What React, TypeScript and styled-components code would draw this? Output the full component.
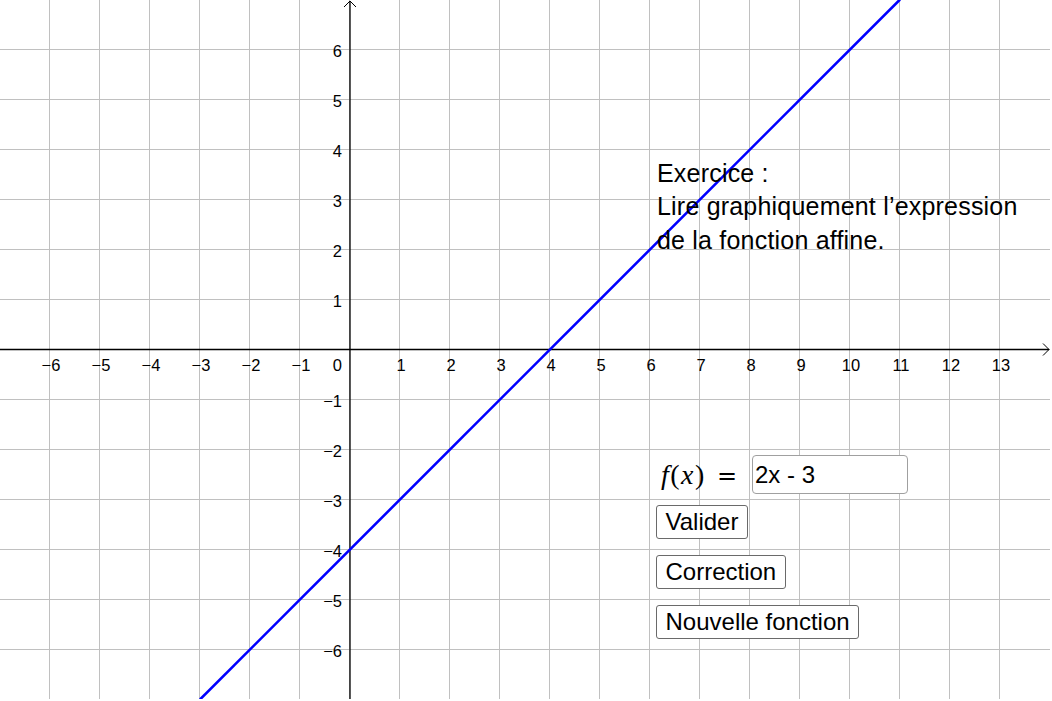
import React from 'react';
import styled, { createGlobalStyle } from 'styled-components';

const GlobalStyle = createGlobalStyle`
    html, body {
        margin: 0;
        padding: 0;
        background: #ffffff;
        overflow: hidden;
    }
`;

const W = 1050;
const H = 699;
const OX = 350;
const OY = 349.5;
const UNIT = 50;

const Stage = styled.div`
    position: relative;
    width: 1052px;
    height: 701px;
    background: #ffffff;
    overflow: hidden;
    font-family: 'Liberation Sans', Arial, sans-serif;
`;

const Canvas = styled.svg`
    display: block;
    width: ${W}px;
    height: ${H}px;
`;

const Statement = styled.div`
    position: absolute;
    left: 657px;
    top: 157px;
    font-family: 'Liberation Sans', Arial, sans-serif;
    font-size: 25px;
    line-height: 32.5px;
    color: #000000;
    white-space: nowrap;
`;

const StatementLine = styled.div<{ $shift?: number }>`
    margin-top: ${(p) => p.$shift ?? 0}px;
    letter-spacing: 0.2px;
`;

const Controls = styled.div`
    position: absolute;
    left: 656px;
    top: 455px;
    display: flex;
    flex-direction: column;
    align-items: flex-start;
    gap: 16px;
`;

const InputRow = styled.div`
    display: flex;
    align-items: center;
    height: 39px;
    margin-bottom: -5px;
`;

const MathLabel = styled.div`
    width: 96px;
    box-sizing: border-box;
    padding-left: 5px;
    display: flex;
    align-items: baseline;
    font-family: 'Liberation Serif', 'Times New Roman', serif;
    font-size: 28px;
    letter-spacing: 1.5px;
    color: #000000;
    i {
        font-style: italic;
    }
`;

const Equals = styled.span`
    font-family: 'DejaVu Serif', serif;
    font-size: 24px;
    letter-spacing: 0;
    margin-left: 11px;
`;

const AnswerInput = styled.input`
    width: 156px;
    height: 39px;
    box-sizing: border-box;
    border: 1px solid #a0a0a0;
    border-radius: 4px;
    padding: 0 0 0 2px;
    margin: 0;
    font-family: 'Liberation Sans', Arial, sans-serif;
    font-size: 24px;
    color: #000000;
    background: #ffffff;
    outline: none;
`;

const Button = styled.button`
    height: 34px;
    box-sizing: border-box;
    padding: 0 8.5px;
    margin: 0;
    border: 1px solid #6a6a6a;
    border-radius: 3px;
    background: #ffffff;
    font-family: 'Liberation Sans', Arial, sans-serif;
    font-size: 24px;
    line-height: 30px;
    color: #000000;
    cursor: pointer;
`;

const range = (a: number, b: number) => Array.from({ length: b - a + 1 }, (_, i) => a + i);

const label = (n: number) => (n < 0 ? `\u2212${-n}` : `${n}`);

const Graph = () => {
    const xs = range(-6, 13).filter((n) => n !== 0);
    const ys = range(-6, 6).filter((n) => n !== 0);
    return (
        <Canvas viewBox={`0 0 ${W} ${H}`}>
            <g stroke="#c0c0c0" strokeWidth={1}>
                {range(-6, 13).map((k) => (
                    <line key={`v${k}`} x1={OX + k * UNIT - 0.5} y1={0} x2={OX + k * UNIT - 0.5} y2={H} />
                ))}
                {range(-6, 6).map((k) => (
                    <line key={`h${k}`} x1={0} y1={OY - k * UNIT} x2={W} y2={OY - k * UNIT} />
                ))}
            </g>
            <g stroke="#000000" strokeWidth={1.3} fill="none">
                <line x1={0} y1={OY} x2={W - 1} y2={OY} />
                <line x1={OX} y1={H} x2={OX} y2={1} />
                <polyline points={`${W - 7},${OY - 6} ${W - 1},${OY} ${W - 7},${OY + 6}`} strokeWidth={1} />
                <polyline points={`${OX - 6},7 ${OX},1 ${OX + 6},7`} strokeWidth={1} />
            </g>
            <g fontFamily="'Liberation Sans', Arial, sans-serif" fontSize={16.5} fill="#000000">
                {xs.map((n) => (
                    <text key={`xl${n}`} x={OX + n * UNIT + 1} y={371} textAnchor="middle">
                        {label(n)}
                    </text>
                ))}
                <text x={342} y={371} textAnchor="end">
                    0
                </text>
                {ys.map((n) => (
                    <text key={`yl${n}`} x={342} y={OY - n * UNIT + 7.5} textAnchor="end">
                        {label(n)}
                    </text>
                ))}
            </g>
            {/* f(x) = x - 4 */}
            <line x1={200} y1={699.5} x2={900} y2={-0.5} stroke="#0000ff" strokeWidth={2.6} />
        </Canvas>
    );
};

const App = () => {
    return (
        <>
            <GlobalStyle />
            <Stage>
                <Graph />
                <Statement>
                    <StatementLine>Exercice :</StatementLine>
                    <StatementLine>Lire graphiquement l’expression</StatementLine>
                    <StatementLine $shift={2}>de la fonction affine.</StatementLine>
                </Statement>
                <Controls>
                    <InputRow>
                        <MathLabel>
                            <i>f</i>(<i>x</i>)<Equals>=</Equals>
                        </MathLabel>
                        <AnswerInput defaultValue="2x - 3" />
                    </InputRow>
                    <Button>Valider</Button>
                    <Button>Correction</Button>
                    <Button>Nouvelle fonction</Button>
                </Controls>
            </Stage>
        </>
    );
};

export default App;
